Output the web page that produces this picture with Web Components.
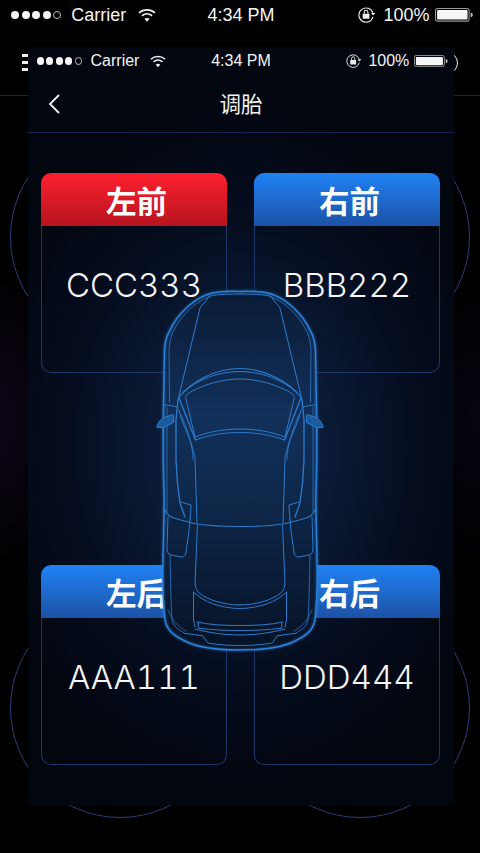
<!DOCTYPE html>
<html lang="zh">
<head>
<meta charset="utf-8">
<title>调胎</title>
<style>
  html, body { margin: 0; background: #000; }
  body { width: 480px; height: 853px; overflow: hidden; font-family: "Liberation Sans", "Noto Sans CJK SC", sans-serif; color: #fff; }
</style>
</head>
<body>
<tune-screen>
  <ios-status slot="status" style="--fs:18px;--pad-l:11px;--pad-r:7px;--h:30px;--shift:2px"></ios-status>
  <tune-panel slot="panel" title-text="调胎">
    <tire-card tone="red" label="左前">CCC333</tire-card>
    <tire-card tone="blue" label="右前">BBB222</tire-card>
    <tire-card tone="blue" label="左后">AAA111</tire-card>
    <tire-card tone="blue" label="右后">DDD444</tire-card>
  </tune-panel>
</tune-screen>

<script>
class IosStatus extends HTMLElement {
  constructor() {
    super();
    this.root = this.attachShadow({ mode: "open" });
    this.root.innerHTML = `
      <style>
        :host { display: grid; grid-template-columns: 1fr auto 1fr; align-items: center;
                height: var(--h); padding: 0 var(--pad-r) 0 var(--pad-l); font-size: var(--fs); color: #f4f4f4; }
        .l, .r { display: flex; align-items: center; }
        .r { justify-content: flex-end; }
        .time { margin-right: var(--shift); }
        .dots { display: flex; gap: .15em; margin-right: .55em; }
        .dots i { width: .44em; height: .44em; border-radius: 50%; background: #f4f4f4; box-sizing: border-box; }
        .dots i:last-child { background: none; border: 1px solid #bbb; }
        .wifi { width: 1em; height: .8em; margin-left: .67em; }
        .lock { width: .95em; height: .95em; margin-right: .47em; }
        .bat { width: 2.1em; height: .76em; margin-left: .32em; }
      </style>
      <div class="l">
        <span class="dots"><i></i><i></i><i></i><i></i><i></i></span>
        <span>Carrier</span>
        <svg class="wifi" viewBox="0 0 18 14" fill="none" stroke="#eee">
          <path d="M1 4.6C5.6.6 12.4.6 17 4.6" stroke-width="1.7"/>
          <path d="M3.9 7.6c3-2.5 7.2-2.5 10.2 0" stroke-width="1.7"/>
          <path d="M9 13.6l-2.6-3c1.500-1.100 3.700-1.100 5.200 0z" fill="#eee" stroke="none"/>
        </svg>
      </div>
      <div class="time">4:34 PM</div>
      <div class="r">
        <svg class="lock" viewBox="0 0 18 18" fill="none" stroke="#eee">
          <path d="M15.6 7.400A7.500 7.500 0 1 0 15.700 11.500" stroke-width="1.100"/>
          <path d="M13.800 7.400h4.200L15.900 10z" fill="#eee" stroke="none"/>
          <rect x="5" y="8.200" width="7" height="5.300" rx=".6" fill="#eee" stroke="none"/>
          <path d="M6.600 8.200V6.400a1.900 1.900 0 0 1 3.800 0V8.200" stroke-width="1.100"/>
        </svg>
        <span>100%</span>
        <svg class="bat" viewBox="0 0 36 13">
          <rect x=".5" y=".5" width="32" height="12" rx="2" fill="none" stroke="#999"/>
          <rect x="2" y="2" width="29" height="9" rx="1" fill="#f6f6f6"/>
          <path d="M34 4.200c1.200 0 2 .9 2 2.300s-.8 2.300-2 2.300z" fill="#bbb"/>
        </svg>
      </div>`;
  }
}
customElements.define("ios-status", IosStatus);

class RingGrid extends HTMLElement {
  constructor() {
    super();
    this.root = this.attachShadow({ mode: "open" });
    this.root.innerHTML = `
      <style>
        :host { display: grid; grid-template-columns: 220px 220px; column-gap: 20px; row-gap: 251px;
                padding: 31px 10px 0; }
        i { display: block; width: 220px; height: 220px; box-sizing: border-box; border-radius: 50%;
            border: 1.5px solid #2a3f7c; }
      </style>
      <i></i><i></i><i></i><i></i>`;
  }
}
customElements.define("ring-grid", RingGrid);

class TuneScreen extends HTMLElement {
  constructor() {
    super();
    this.root = this.attachShadow({ mode: "open" });
    this.root.innerHTML = `
      <style>
        :host { display: block; position: relative; width: 480px; height: 853px; overflow: hidden;
                background: radial-gradient(70px 150px at 0 420px, #0e0518, transparent),
                            radial-gradient(70px 150px at 480px 420px, #080411, transparent), #000; }
        .under { display: flex; align-items: center; justify-content: space-between; height: 65px;
                 border-bottom: 1.5px solid #1a2448; padding: 0 22px; }
        .menu { display: flex; flex-direction: column; gap: 4px; width: 6px; }
        .menu i { display: block; height: 3px; background: #eee; }
        .ring { width: 20px; height: 20px; border: 1.5px solid #eee; border-radius: 50%; }
        ::slotted(tune-panel) { position: absolute; left: 28px; top: 47px; }
      </style>
      <slot name="status"></slot>
      <div class="under"><div class="menu"><i></i><i></i><i></i></div><div class="ring"></div></div>
      <ring-grid></ring-grid>
      <slot name="panel"></slot>`;
  }
}
customElements.define("tune-screen", TuneScreen);

class TunePanel extends HTMLElement {
  constructor() {
    super();
    this.root = this.attachShadow({ mode: "open" });
    const title = this.getAttribute("title-text");
    this.root.innerHTML = `
      <style>
        :host { display: block; width: 426px; height: 758px; overflow: hidden;
                background: radial-gradient(260px 340px at 213px 400px, #0e2444 0%, #0a1a35 35%, #050d1f 68%, #02060f 100%); }
        ios-status { --fs:16px; --pad-l:9px; --pad-r:6px; --h:28px; --shift:3px; }
        nav { display: grid; grid-template-columns: 1fr auto 1fr; align-items: center; height: 57px;
              border-bottom: 1.5px solid #16244f; padding: 0 20px; font: 21.5px "Noto Sans CJK SC", sans-serif; color: #f2f2f2; }
        nav svg { width: 13px; height: 20px; }
        nav span { margin-top: -2px; }
        .cards { display: grid; grid-template-columns: 186px 186px; column-gap: 27px; row-gap: 192px;
                 padding: 40px 14px 0 13px; }
        car-blueprint { position: absolute; left: 112px; top: 233px; }
      </style>
      <ios-status></ios-status>
      <nav>
        <svg viewBox="0 0 13 20" fill="none" stroke="#f2f2f2" stroke-width="1.8"><path d="M11 1L2 10l9 9"/></svg>
        <span>${title}</span>
      </nav>
      <div class="cards"><slot></slot></div>
      <car-blueprint></car-blueprint>`;
  }
}
customElements.define("tune-panel", TunePanel);

class TireCard extends HTMLElement {
  constructor() {
    super();
    this.root = this.attachShadow({ mode: "open" });
    const red = this.getAttribute("tone") === "red";
    this.root.innerHTML = `
      <style>
        :host { display: flex; flex-direction: column; height: 200px; }
        header { height: 53px; display: flex; align-items: center; justify-content: center; flex: none;
                 border-radius: 10px 10px 0 0; padding-left: 5px;
                 background: ${red ? "linear-gradient(#ff202f, #b5141f)" : "linear-gradient(#2082f4, #1c52a6)"};
                 font: 700 30.5px "Noto Sans CJK SC", sans-serif; color: #fff; }
        .val { flex: 1; text-align: center; font: 300 33px Inter, "Liberation Sans", sans-serif;
               font-variant-numeric: tabular-nums; font-feature-settings: "tnum"; color: #f6f6f6; padding-top: 39px;
               border: 1.5px solid #1d3766; border-top: 0; border-radius: 0 0 10px 10px; }
      </style>
      <header>${this.getAttribute("label")}</header>
      <div class="val"><slot></slot></div>`;
  }
}
customElements.define("tire-card", TireCard);

class CarBlueprint extends HTMLElement {
  constructor() {
    super();
    this.root = this.attachShadow({ mode: "open" });
    const outline = "M100 11.500C90 11 80 11.500 72 13C56 17 38 32 29 52C26 57 25 62 24.500 70L23.500 127C23 160 23.500 200 24 213C24.500 222 23.500 250 23 280C22.500 300 23 322 25 340C27 350 33 355 43 360C55 367 75 370 100 370";
    this.root.innerHTML = `
      <style>
        :host { display: block; width: 200px; height: 380px; }
        svg { display: block; }
      </style>
      <svg width="200" height="380" viewBox="0 0 200 380" fill="none" stroke-linecap="round" stroke-linejoin="round">
        <defs>
          <linearGradient id="body" x1="0" y1="0" x2="0" y2="1">
            <stop offset="0" stop-color="#0b1b36"/>
            <stop offset=".35" stop-color="#12305a"/>
            <stop offset=".6" stop-color="#0e2749"/>
            <stop offset="1" stop-color="#071226"/>
          </linearGradient>
          <filter id="soft" x="-10%" y="-10%" width="120%" height="120%"><feGaussianBlur stdDeviation="1.2"/></filter>
          <g id="outer">
            <path d="${outline}"/>
          </g>
          <g id="mirror">
            <path d="M17 147C18 142 21 139 24 137.500L33 134.500L34 142L26 146.500C23 148 19 148 17 147Z" fill="#1c5a9e" stroke="#2b7fd4" stroke-width="1"/>
          </g>
          <g id="half">
            <!-- hood -->
            <path d="M72 13L60 28L38 120" stroke-width="1"/>
            <path d="M71 16.500C57 20 40 36 32 54C30 60 29 66 29 72L29.500 122" stroke-width=".8"/>
            <path d="M72 15.500C82 14 92 14 100 14" stroke-width="1"/>
            <!-- windshield -->
            <path d="M39 117C52 101 76 88.500 100 88.500" stroke-width="1.100"/>
            <path d="M43 113C56 100 78 91.500 100 91.500" stroke-width="1"/>
            <path d="M48 113.500C60 106 80 99 100 99" stroke-width="1"/>
            <path d="M48 113.500C46 115.500 45.500 117 46 119L55 157C68 152 84 149 100 149" stroke-width="1"/>
            <path d="M55.500 160C68 155 84 152.500 100 152.500" stroke-width="1"/>
            <path d="M39 118L55.500 160" stroke-width="1.300"/>
            <path d="M25 125C30 125 34 126 38 127.500" stroke-width="1"/>
            <!-- roof rails and doors -->
            <path d="M38 120L36 140L36 180C36.500 195 38 210 40 223L45 237" stroke-width="1.300"/>
            <path d="M39 130C42 145 52 160 55 178L57 243" stroke-width="1"/>
            <path d="M41 135C47 148 53 165 53 180" stroke-width=".8"/>
            <path d="M41 222L51 225L50 240" stroke-width="1"/>
            <path d="M27 127L27 232" stroke-width=".7"/>
            <!-- trunk line and rear quarter -->
            <path d="M25 230C27 234 30 237 34 238C44 241 52 243 57 244C70 246 86 246.500 100 246.500" stroke-width="1.200"/>
            <path d="M50 240C49 252 47 265 46 272C45.500 276 44 277 41 277L31 275C28 274 27 272 27 268L28 237" stroke-width="1"/>
            <!-- rear glass and boot -->
            <path d="M57.500 245L55 303C55 307 57 311 59 313C68 320 84 325 100 325" stroke-width="1"/>
            <path d="M53.500 312C63 322 82 328.500 100 328.500" stroke-width="1"/>
            <path d="M53.500 312L53.500 340L55 347" stroke-width="1"/>
            <path d="M30 275C30.500 300 31 325 32 340C33 346 38 350 45 353.500" stroke-width=".8"/>
            <!-- grille and bumper -->
            <path d="M57 342C70 345 85 345.500 100 345.500" stroke-width="1"/>
            <path d="M58.500 342.500L58 348C72 350 86 350.500 100 350.500" stroke-width="1"/>
            <path d="M55 349C70 353 85 355 100 355" stroke-width="1"/>
            <path d="M45 353.500C52 354 58 355 63 356C65 359 66 361 68 363C78 365 90 365.500 100 365.500" stroke-width="1"/>
            <path d="M28 330C32 340 38 347 46 351" stroke-width=".7"/>
          </g>
        </defs>
        <path d="${outline}C125 370 145 367 157 360C167 355 173 350 175 340C177 322 177.500 300 177 280C176.500 250 175.500 222 176 213C176.500 200 177 160 176.500 127L175.500 70C175 62 174 57 171 52C162 32 144 17 128 13C120 11.500 110 11 100 11.500Z" fill="url(#body)"/>
        <g stroke="#2f86dc" opacity=".4" stroke-width="3" filter="url(#soft)">
          <use href="#outer"/><use href="#outer" transform="translate(200 0) scale(-1 1)"/>
        </g>
        <g stroke="#2c80d6" stroke-width="1.500">
          <use href="#outer"/><use href="#outer" transform="translate(200 0) scale(-1 1)"/>
        </g>
        <g stroke="#2c7ccd">
          <use href="#half"/><use href="#half" transform="translate(200 0) scale(-1 1)"/>
        </g>
        <use href="#mirror"/>
        <use href="#mirror" transform="translate(200 0) scale(-1 1)"/>
      </svg>`;
  }
}
customElements.define("car-blueprint", CarBlueprint);
</script>
</body>
</html>
